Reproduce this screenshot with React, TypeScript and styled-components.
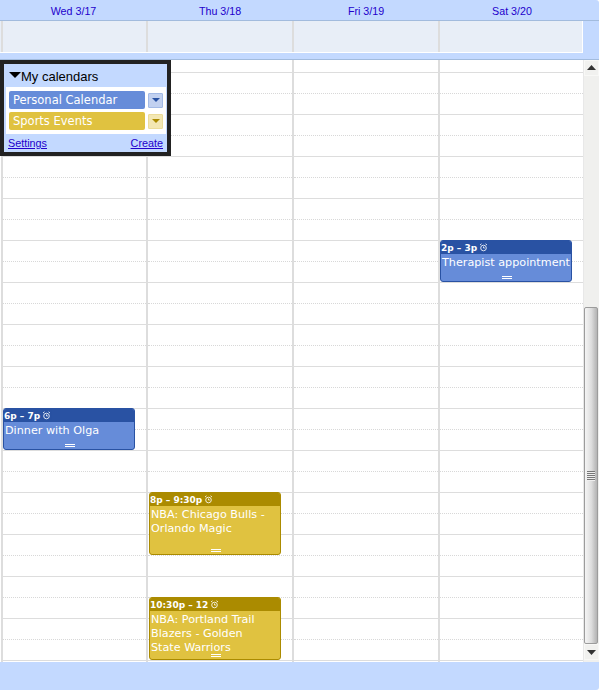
import React from 'react';
import styled, { createGlobalStyle } from 'styled-components';

const GlobalStyle = createGlobalStyle`
  html, body {
    margin: 0;
    padding: 0;
    background: #fff;
  }
`;

const Page = styled.div`
  width: 599px;
  height: 690px;
  display: flex;
  flex-direction: column;
  background: #c3d9ff;
  border-radius: 0 3px 3px 0;
  overflow: hidden;
  font-family: 'Liberation Sans', Arial, sans-serif;
`;

const DayHeader = styled.div`
  height: 20px;
  display: grid;
  grid-template-columns: 147px 146px 146px 146px;
  border-bottom: 1px solid #a2bbdd;
`;

const DayLabel = styled.div`
  text-align: center;
  font-size: 10.7px;
  line-height: 22px;
  color: #2200cc;
`;

const AllDayRow = styled.div`
  width: 583px;
  height: 32px;
  box-sizing: border-box;
  display: grid;
  grid-template-columns: 146px 146px 146px 145px;
  background: #e8eef7;
  border-right: 1px solid #fff;
  border-bottom: 1px solid #fff;
`;

const AllDayCell = styled.div`
  border-left: 2px solid #ddd;
  &:first-child {
    margin-left: 1px;
  }
`;

const Divider = styled.div`
  height: 6px;
  border-bottom: 1px solid #a2bbdd;
`;

const Body = styled.div`
  height: 602px;
  display: flex;
  position: relative;
  background: #fff;
`;

const Grid = styled.div`
  width: 583px;
  display: grid;
  grid-template-columns: 148px 146px 146px 143px;
  overflow: hidden;
`;

const DayColumn = styled.div`
  position: relative;
  border-left: 2px solid #ddd;
  margin-left: -2px;
  &:first-child {
    margin-left: 1px;
  }
`;

const LeadSlot = styled.div`
  height: 12px;
  border-bottom: 1px solid #ddd;
`;

const HalfHour = styled.div<{ $solid?: boolean }>`
  height: 20px;
  border-bottom: 1px ${(p) => (p.$solid ? 'solid #ddd' : 'dotted #d8d8d8')};
`;

const Event = styled.div<{ $tone: 'blue' | 'gold'; $top: number; $height: number; $left: number }>`
  position: absolute;
  top: ${(p) => p.$top}px;
  left: ${(p) => p.$left}px;
  width: 132px;
  height: ${(p) => p.$height}px;
  box-sizing: border-box;
  border-radius: 3px;
  border: 1px solid ${(p) => (p.$tone === 'blue' ? '#2952a3' : '#ab8b00')};
  background: ${(p) => (p.$tone === 'blue' ? '#668cd9' : '#e0c240')};
  color: #fff;
  overflow: hidden;
`;

const EventHead = styled.div<{ $tone: 'blue' | 'gold' }>`
  height: 13px;
  display: flex;
  align-items: center;
  gap: 2px;
  background: ${(p) => (p.$tone === 'blue' ? '#2952a3' : '#ab8b00')};
  font-family: 'DejaVu Sans', Verdana, sans-serif;
  font-size: 9px;
  font-weight: bold;
`;

const EventTitle = styled.div`
  padding: 2px 0 0 1px;
  font-family: 'DejaVu Sans', Verdana, sans-serif;
  font-size: 11.2px;
  line-height: 14px;
  white-space: pre;
`;

const Grip = styled.div`
  position: absolute;
  left: 61px;
  bottom: 2px;
  width: 10px;
  height: 1px;
  border-top: 1px solid #fff;
  border-bottom: 1px solid #fff;
`;

const CalendarPanel = styled.div`
  position: absolute;
  top: 0;
  left: 0;
  width: 171px;
  height: 96px;
  box-sizing: border-box;
  border: 4px solid #222;
  background: #c3d9ff;
  display: flex;
  flex-direction: column;
`;

const PanelTitle = styled.div`
  height: 23px;
  display: flex;
  align-items: center;
  padding-left: 5px;
  font-size: 13px;
  color: #000;
  padding-top: 2px;
  box-sizing: border-box;
`;

const Triangle = styled.span`
  width: 0;
  height: 0;
  margin-bottom: 4px;
  border-left: 6px solid transparent;
  border-right: 6px solid transparent;
  border-top: 6px solid #000;
`;

const CalendarList = styled.div`
  height: 47px;
  margin-left: 2px;
  margin-right: 1px;
  padding: 4px 0 0 3px;
  box-sizing: border-box;
  background: #fff;
  display: flex;
  flex-direction: column;
  gap: 3px;
`;

const CalendarRow = styled.div`
  display: flex;
  align-items: center;
  gap: 3px;
`;

const CalendarChip = styled.div<{ $color: string }>`
  width: 136px;
  height: 18px;
  border-radius: 2px;
  padding-left: 4px;
  box-sizing: border-box;
  background: ${(p) => p.$color};
  color: #fff;
  font-family: 'DejaVu Sans', Verdana, sans-serif;
  font-size: 11.5px;
  line-height: 19px;
`;

const MenuBox = styled.div<{ $bg: string; $line: string }>`
  width: 15px;
  height: 15px;
  box-sizing: border-box;
  display: flex;
  align-items: center;
  justify-content: center;
  background: ${(p) => p.$bg};
  border: 1px solid ${(p) => p.$line};
  border-radius: 1px;
`;

const MenuArrow = styled.span<{ $color: string }>`
  width: 0;
  height: 0;
  border-left: 4px solid transparent;
  border-right: 4px solid transparent;
  border-top: 4px solid ${(p) => p.$color};
`;

const PanelLinks = styled.div`
  flex: 1;
  display: flex;
  justify-content: space-between;
  align-items: center;
  padding: 0 4px;
  font-size: 10.8px;
`;

const PanelLink = styled.a`
  color: #2200cc;
  text-decoration: underline;
`;

const ScrollTrack = styled.div`
  width: 16px;
  box-sizing: border-box;
  display: flex;
  flex-direction: column;
  background: #f0f0ee;
  border-left: 1px solid #e8e8e8;
`;

const ScrollButton = styled.div`
  height: 16px;
  display: flex;
  align-items: center;
  justify-content: center;
  background: #f1f1ef;
  border: 1px solid #f8f8f6;
  box-sizing: border-box;
`;

const ScrollSpace = styled.div`
  height: 231px;
`;

const ScrollThumb = styled.div`
  height: 337px;
  margin-right: 1px;
  display: flex;
  align-items: flex-end;
  justify-content: center;
  padding-bottom: 162px;
  box-sizing: border-box;
  border: 1px solid #9c9c9c;
  border-radius: 2px;
  background: linear-gradient(90deg, #f4f4f4 0%, #e8e8e8 30%, #dcdcdc 55%, #c4c4c4 80%, #b4b4b4 100%);
`;

const ThumbGrip = styled.div`
  width: 8px;
  height: 10px;
  background: repeating-linear-gradient(180deg, #777 0, #777 1px, #eee 1px, #eee 2px);
`;

const Footer = styled.div`
  flex: 1;
`;

const Alarm = () => (
  <svg width="9" height="9" viewBox="0 0 9 9" fill="none" stroke="#fff" strokeWidth="1" opacity="0.85">
    <circle cx="4.5" cy="5" r="2.8" />
    <path d="M1 2 L2.5 0.8 M8 2 L6.5 0.8 M4.5 3.5 V5 H5.8" />
  </svg>
);

type EventData = {
  day: number;
  time: string;
  title: string;
  tone: 'blue' | 'gold';
  top: number;
  height: number;
  left: number;
};

const events: EventData[] = [
  { day: 0, time: '6p – 7p', title: 'Dinner with Olga', tone: 'blue', top: 348, height: 42, left: 0 },
  { day: 1, time: '8p – 9:30p', title: 'NBA: Chicago Bulls -\nOrlando Magic', tone: 'gold', top: 432, height: 63, left: 1 },
  { day: 1, time: '10:30p – 12', title: 'NBA: Portland Trail\nBlazers - Golden\nState Warriors', tone: 'gold', top: 537, height: 63, left: 1 },
  { day: 3, time: '2p – 3p', title: 'Therapist appointment', tone: 'blue', top: 180, height: 42, left: 0 },
];

const days = ['Wed 3/17', 'Thu 3/18', 'Fri 3/19', 'Sat 3/20'];
const slots = Array.from({ length: 28 }, (_, i) => i);

export default function App() {
  return (
    <Page>
      <GlobalStyle />
      <DayHeader>
        {days.map((d) => (
          <DayLabel key={d}>{d}</DayLabel>
        ))}
      </DayHeader>
      <AllDayRow>
        {days.map((d) => (
          <AllDayCell key={d} />
        ))}
      </AllDayRow>
      <Divider />
      <Body>
        <Grid>
          {days.map((d, dayIndex) => (
            <DayColumn key={d}>
              <LeadSlot />
              {slots.map((i) => (
                <HalfHour key={i} $solid={i % 2 === 1} />
              ))}
              {events
                .filter((e) => e.day === dayIndex)
                .map((e) => (
                  <Event key={e.time} $tone={e.tone} $top={e.top} $height={e.height} $left={e.left}>
                    <EventHead $tone={e.tone}>
                      {e.time} <Alarm />
                    </EventHead>
                    <EventTitle>{e.title}</EventTitle>
                    <Grip />
                  </Event>
                ))}
            </DayColumn>
          ))}
        </Grid>
        <ScrollTrack>
          <ScrollButton>
            <svg width="9" height="6" viewBox="0 0 9 6">
              <path d="M4.5 0 L9 5 H0 Z" fill="#333" />
            </svg>
          </ScrollButton>
          <ScrollSpace />
          <ScrollThumb>
            <ThumbGrip />
          </ScrollThumb>
          <ScrollButton>
            <svg width="9" height="6" viewBox="0 0 9 6">
              <path d="M4.5 6 L9 1 H0 Z" fill="#333" />
            </svg>
          </ScrollButton>
        </ScrollTrack>
        <CalendarPanel>
          <PanelTitle>
            <Triangle />
            My calendars
          </PanelTitle>
          <CalendarList>
            <CalendarRow>
              <CalendarChip $color="#668cd9">Personal Calendar</CalendarChip>
              <MenuBox $bg="#c2d1f0" $line="#a3bae6">
                <MenuArrow $color="#2952a3" />
              </MenuBox>
            </CalendarRow>
            <CalendarRow>
              <CalendarChip $color="#e0c240">Sports Events</CalendarChip>
              <MenuBox $bg="#f3e7b3" $line="#ecdc99">
                <MenuArrow $color="#ab8b00" />
              </MenuBox>
            </CalendarRow>
          </CalendarList>
          <PanelLinks>
            <PanelLink>Settings</PanelLink>
            <PanelLink>Create</PanelLink>
          </PanelLinks>
        </CalendarPanel>
      </Body>
      <Footer />
    </Page>
  );
}
